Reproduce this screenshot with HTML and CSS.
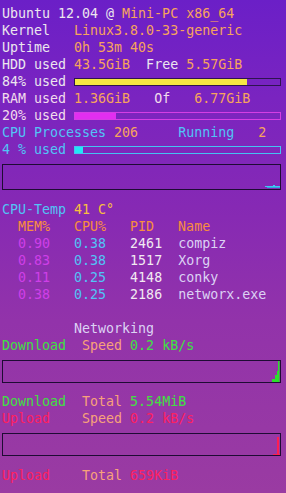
FILE: index.html
```
<!DOCTYPE html>
<html>
<head>
<meta charset="utf-8">
<link rel="stylesheet" href="styles.css">
</head>
<body>
<div class="conky">
  <div class="ln"><span class="lt">Ubuntu 12.04 @ </span><span class="or">Mini-PC x86_64</span></div>
  <div class="ln"><span class="lt">Kernel   </span><span class="or">Linux3.8.0-33-generic</span></div>
  <div class="ln"><span class="lt">Uptime   </span><span class="or">0h 53m 40s</span></div>
  <div class="ln"><span class="lt">HDD used </span><span class="or">43.5GiB</span><span class="lt">  Free </span><span class="or">5.57GiB</span></div>
  <div class="ln barrow"><span class="lbl lt">84% used</span><div class="bar bar-y"><div class="fill" style="width:84%"></div></div></div>
  <div class="ln"><span class="pk">RAM used </span><span class="or">1.36GiB</span><span class="pk">   Of   </span><span class="or">6.77GiB</span></div>
  <div class="ln barrow"><span class="lbl pk">20% used</span><div class="bar bar-m"><div class="fill" style="width:20%"></div></div></div>
  <div class="ln"><span class="cy">CPU Processes </span><span class="or">206</span><span class="cy">     Running   </span><span class="or">2</span></div>
  <div class="ln barrow"><span class="lbl cy">4 % used</span><div class="bar bar-c"><div class="fill" style="width:4%"></div></div></div>

  <div class="graph g-cpu">
    <svg width="277" height="24" viewBox="0 0 277 24">
      <rect x="262" y="21" width="15" height="1" fill="#3ec8f2"/>
      <rect x="264" y="22" width="13" height="1" fill="#2fa6d8"/>
      <rect x="270" y="20" width="2" height="1" fill="#3ec8f2"/>
    </svg>
  </div>

  <div class="ln"><span class="cy">CPU-Temp </span><span class="yl">41 C°</span></div>
  <div class="ln"><span class="hd">  MEM%   CPU%   PID   Name</span></div>
  <div class="ln"><span class="mg">  0.90   </span><span class="cy">0.38   </span><span class="wt">2461  </span><span class="lv">compiz</span></div>
  <div class="ln"><span class="mg">  0.83   </span><span class="cy">0.38   </span><span class="wt">1517  </span><span class="lv">Xorg</span></div>
  <div class="ln"><span class="mg">  0.11   </span><span class="cy">0.25   </span><span class="wt">4148  </span><span class="lv">conky</span></div>
  <div class="ln"><span class="mg">  0.38   </span><span class="cy">0.25   </span><span class="wt">2186  </span><span class="lv">networx.exe</span></div>
  <div class="ln"> </div>
  <div class="ln"><span class="lv">         Networking</span></div>
  <div class="ln"><span class="gr">Download  </span><span class="sp">Speed </span><span class="gr">0.2 kB/s</span></div>

  <div class="graph g-net">
    <svg width="277" height="21" viewBox="0 0 277 21">
      <rect x="275" y="0" width="1.5" height="21" fill="#2be02b"/>
      <rect x="272" y="14" width="2" height="7" fill="#2be02b"/>
      <rect x="269" y="18" width="3" height="3" fill="#2be02b"/>
      <rect x="274" y="10" width="1" height="11" fill="#2be02b"/>
    </svg>
  </div>

  <div class="ln"><span class="gr">Download  </span><span class="sp">Total </span><span class="gr">5.54MiB</span></div>
  <div class="ln"><span class="rd">Upload    </span><span class="sp">Speed </span><span class="rd">0.2 kB/s</span></div>

  <div class="graph g-up">
    <svg width="277" height="21" viewBox="0 0 277 21">
      <rect x="274" y="3" width="2" height="18" fill="#ff1e50"/>
      <rect x="270" y="20" width="7" height="1" fill="#ff1e50"/>
    </svg>
  </div>

  <div class="ln"><span class="rd">Upload    </span><span class="sp">Total </span><span class="rd">659KiB</span></div>
</div>
</body>
</html>
```
FILE: styles.css
```
html, body {
  margin: 0;
  padding: 0;
}
body {
  width: 286px;
  height: 493px;
  overflow: hidden;
  background: linear-gradient(180deg, #6b1fc7 0%, #7a24c0 20%, #8629b4 42%, #9233aa 65%, #9a3ba2 100%);
  font-family: "DejaVu Sans Mono", "Liberation Mono", monospace;
  font-size: 13.3px;
}
.conky {
  padding: 5px 5px 0 2px;
}
.ln {
  height: 17px;
  line-height: 17px;
  white-space: pre;
}
.barrow {
  display: flex;
  align-items: center;
}
.lbl {
  width: 72px;
  flex: none;
}
.bar {
  flex: 1;
  height: 8px;
  box-sizing: border-box;
  border: 1px solid;
  margin-top: 0px;
}
.bar .fill {
  height: 100%;
}
.bar-y { border-color: #2e1450; }
.bar-y .fill { background: #f6e743; }
.bar-m { border-color: #d43ee4; }
.bar-m .fill { background: #e22ef0; }
.bar-c { border-color: #44c2f2; }
.bar-c .fill { background: #22e6f6; }

.graph {
  border: 1px solid #1e0b34;
  margin: 6px 0 10px 0;
}
.graph svg { display: block; }
.g-cpu { height: 24px; margin-bottom: 10.5px; }
.g-net { height: 21px; margin-bottom: 10.5px; }
.g-up { height: 21px; margin-bottom: 10.5px; }

.lt { color: #ece6ee; }
.or { color: #f7a45c; }
.pk { color: #f3dcec; }
.cy { color: #52c4f6; }
.yl { color: #f8c03e; }
.hd { color: #f88e3e; }
.mg { color: #cf3fe8; }
.wt { color: #f2eaf2; }
.lv { color: #dcd2f4; }
.gr { color: #3fe042; }
.sp { color: #f8a27a; }
.rd { color: #ff2060; }
```
